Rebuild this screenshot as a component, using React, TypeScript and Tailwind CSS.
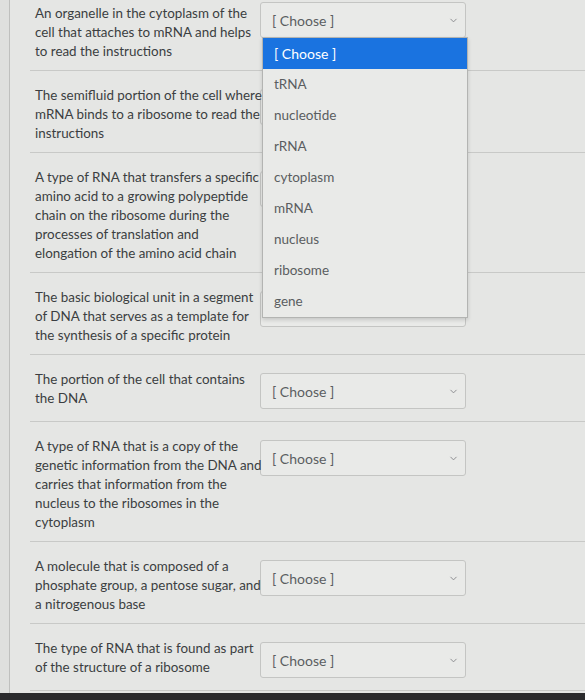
import React from 'react';
import { ChevronDown } from 'lucide-react';

const rows: string[][] = [
  ['An organelle in the cytoplasm of the', 'cell that attaches to mRNA and helps', 'to read the instructions'],
  ['The semifluid portion of the cell where', 'mRNA binds to a ribosome to read the', 'instructions'],
  [
    'A type of RNA that transfers a specific',
    'amino acid to a growing polypeptide',
    'chain on the ribosome during the',
    'processes of translation and',
    'elongation of the amino acid chain',
  ],
  ['The basic biological unit in a segment', 'of DNA that serves as a template for', 'the synthesis of a specific protein'],
  ['The portion of the cell that contains', 'the DNA'],
  [
    'A type of RNA that is a copy of the',
    'genetic information from the DNA and',
    'carries that information from the',
    'nucleus to the ribosomes in the',
    'cytoplasm',
  ],
  ['A molecule that is composed of a', 'phosphate group, a pentose sugar, and', 'a nitrogenous base'],
  ['The type of RNA that is found as part', 'of the structure of a ribosome'],
];

const options = ['tRNA', 'nucleotide', 'rRNA', 'cytoplasm', 'mRNA', 'nucleus', 'ribosome', 'gene'];

// selects sitting under the open list
const covered = [1, 2, 3];

function Select({ hidden }: { hidden?: boolean }) {
  return (
    <div className="flex h-[36px] w-[206px] items-center justify-between rounded-[3px] border border-[#c4c5c3] bg-[#e9eae8] pl-[11px] pr-[6px] text-[14px] text-[#5b5e61]">
      <span className={hidden ? 'invisible' : ''}>[ Choose ]</span>
      <ChevronDown size={11} strokeWidth={2} className="text-[#85878a]" />
    </div>
  );
}

export default function App() {
  return (
    <div className="relative flex h-[700px] w-[585px] flex-col overflow-hidden bg-[#e5e6e4] font-['Lato','Noto_Sans',sans-serif]">
      <div className="flex flex-1 overflow-hidden">
        {/* left gutter */}
        <div className="w-[10px] shrink-0 border-r border-[#bfc0be] bg-[#dfe0de]" />

        <div className="-mt-[11px] flex-1 pl-[20px]">
          {rows.map((lines, i) => (
            <div key={i} className="flex border-b border-[#c8c9c7]">
              <div className="relative z-10 w-[230px] shrink-0 whitespace-nowrap pl-[5px] pt-[15px] pb-[9px] text-[13.4px] leading-[19px] text-[#3b3e41]">
                {lines.map((l, j) => (
                  <div key={j}>{l}</div>
                ))}
              </div>
              <div className={i === 0 ? 'pt-[13px] pb-[12px]' : 'pt-[18px] pb-[12px]'}>
                <Select hidden={covered.includes(i)} />
              </div>
            </div>
          ))}
        </div>
      </div>

      {/* bezel */}
      <div className="h-[7px] shrink-0 bg-[#2b2b2d]" />

      {/* open dropdown list */}
      <div className="absolute left-[262px] top-[37px] z-20 w-[206px] border border-[#b3b4b2] bg-[#e9eae8] shadow-[0_2px_4px_rgba(0,0,0,0.15)]">
        <div className="flex h-[31px] items-center bg-[#1a73e0] pl-[11px] text-[14px] text-white">[ Choose ]</div>
        {options.map((o) => (
          <div key={o} className="flex h-[31px] items-center pl-[11px] text-[13.5px] text-[#5a5d60]">
            {o}
          </div>
        ))}
      </div>
    </div>
  );
}
